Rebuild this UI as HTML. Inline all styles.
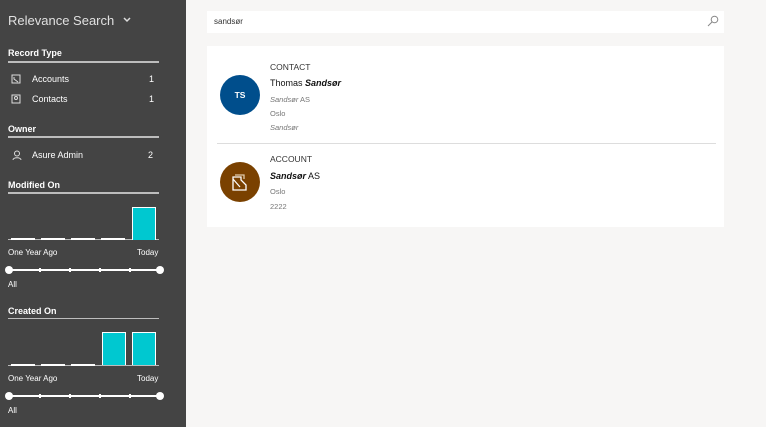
<!DOCTYPE html>
<html><head><meta charset="utf-8"><style>
*{margin:0;padding:0;box-sizing:border-box}
body{width:766px;height:427px;background:#f7f6f5;font-family:"Segoe UI","Liberation Sans",sans-serif;position:relative;overflow:hidden}
.sb{position:absolute;left:0;top:0;width:186px;height:427px;background:#444}
.a{position:absolute;white-space:nowrap}
.h{font-size:9px;font-weight:bold;color:#fff}
.ln{position:absolute;left:8px;width:151px;height:1.5px;background:#bdbdbd}
.it{font-size:9px;color:#fff}
.bar{position:absolute;background:#00c8d0;border:1px solid #fff;border-bottom:none}
.base{position:absolute;height:2px;background:#fff}
.sl{position:absolute;left:9px;width:151px;height:2px;background:#fff}
.k{position:absolute;width:8px;height:8px;border-radius:50%;background:#fff}
.t{position:absolute;width:2px;height:4px;background:#fff}
.sm{font-size:8px;color:#fff}
.card{position:absolute;left:207px;top:46px;width:517px;height:181px;background:#fff}
.g{color:#777;font-size:7.5px}
</style></head><body>
<div class="sb">
<div class="a" style="left:8px;top:13px;font-size:13px;color:#e0e0e0">Relevance Search</div>
<svg class="a" style="left:123px;top:17px" width="8" height="6"><path d="M1 1l3 3 3-3" stroke="#ddd" stroke-width="1.5" fill="none"/></svg>
<div class="a h" style="left:8px;top:48px">Record Type</div><div class="ln" style="top:61px"></div>
<svg class="a" style="left:11px;top:74px" width="10" height="10"><rect x="1" y="1" width="8" height="8" fill="none" stroke="#ddd"/><path d="M3 3v2l4 3" stroke="#ddd" fill="none"/></svg>
<div class="a it" style="left:32px;top:74px">Accounts</div><div class="a it" style="left:149px;top:74px">1</div>
<svg class="a" style="left:11px;top:94px" width="10" height="10"><rect x="1" y="1" width="8" height="8" fill="none" stroke="#ddd"/><circle cx="5" cy="4" r="1.5" fill="none" stroke="#ddd"/></svg>
<div class="a it" style="left:32px;top:94px">Contacts</div><div class="a it" style="left:149px;top:94px">1</div>
<div class="a h" style="left:8px;top:124px">Owner</div><div class="ln" style="top:136px"></div>
<svg class="a" style="left:12px;top:150px" width="10" height="11"><circle cx="5" cy="3.5" r="2.5" fill="none" stroke="#ddd"/><path d="M1 10c0-3 8-3 8 0" fill="none" stroke="#ddd"/></svg>
<div class="a it" style="left:32px;top:150px">Asure Admin</div><div class="a it" style="left:148px;top:150px">2</div>
<div class="a h" style="left:8px;top:180px">Modified On</div><div class="ln" style="top:192px"></div>
<div class="base" style="left:8px;top:239px;width:151px;height:1px;background:#bbb"></div>
<div class="base" style="left:11px;top:238px;width:24px"></div><div class="base" style="left:41px;top:238px;width:24px"></div><div class="base" style="left:71px;top:238px;width:24px"></div><div class="base" style="left:101px;top:238px;width:24px"></div>
<div class="bar" style="left:132px;top:207px;width:24px;height:33px"></div>
<div class="a sm" style="left:8px;top:248px">One Year Ago</div><div class="a sm" style="left:137px;top:248px">Today</div>
<div class="sl" style="top:269px"></div><div class="k" style="left:5px;top:266px"></div><div class="k" style="left:156px;top:266px"></div>
<div class="t" style="left:39px;top:268px"></div><div class="t" style="left:69px;top:268px"></div><div class="t" style="left:99px;top:268px"></div><div class="t" style="left:129px;top:268px"></div>
<div class="a sm" style="left:8px;top:280px">All</div>
<div class="a h" style="left:8px;top:306px">Created On</div><div class="ln" style="top:318px;height:1px"></div>
<div class="base" style="left:8px;top:365px;width:151px;height:1px;background:#bbb"></div>
<div class="base" style="left:11px;top:364px;width:24px"></div><div class="base" style="left:41px;top:364px;width:24px"></div><div class="base" style="left:71px;top:364px;width:24px"></div>
<div class="bar" style="left:102px;top:332px;width:24px;height:33px"></div>
<div class="bar" style="left:132px;top:332px;width:24px;height:33px"></div>
<div class="a sm" style="left:8px;top:374px">One Year Ago</div><div class="a sm" style="left:137px;top:374px">Today</div>
<div class="sl" style="top:395px"></div><div class="k" style="left:5px;top:392px"></div><div class="k" style="left:156px;top:392px"></div>
<div class="t" style="left:39px;top:394px"></div><div class="t" style="left:69px;top:394px"></div><div class="t" style="left:99px;top:394px"></div><div class="t" style="left:129px;top:394px"></div>
<div class="a sm" style="left:8px;top:406px">All</div>
</div>
<div class="a" style="left:207px;top:11px;width:517px;height:22px;background:#fff"></div>
<div class="a" style="left:214px;top:17px;font-size:8px;color:#333">sandsør</div>
<svg class="a" style="left:707px;top:15px" width="12" height="12"><circle cx="7.5" cy="4.5" r="3.3" fill="none" stroke="#888"/><path d="M5 7l-4 4" stroke="#888"/></svg>
<div class="card">
<div class="a" style="left:13px;top:29px;width:40px;height:40px;border-radius:50%;background:#004e8c;color:#fff;font-size:8.5px;font-weight:bold;text-align:center;line-height:40px">TS</div>
<div class="a" style="left:63px;top:16px;font-size:8.5px;color:#333">CONTACT</div>
<div class="a" style="left:63px;top:32px;font-size:9px;color:#111">Thomas <b><i>Sandsør</i></b></div>
<div class="a g" style="left:63px;top:49px"><i>Sandsør</i> AS</div>
<div class="a g" style="left:63px;top:63px">Oslo</div>
<div class="a g" style="left:63px;top:77px"><i>Sandsør</i></div>
<div class="a" style="left:10px;top:97px;width:499px;height:1px;background:#ddd"></div>
<div class="a" style="left:13px;top:116px;width:40px;height:40px;border-radius:50%;background:#7a4100"></div>
<svg class="a" style="left:23px;top:126px" width="20" height="20"><path d="M5 3h9v4" fill="none" stroke="#e0c9a8" stroke-width="1.3"/><path d="M3 5h8v3l5 5v5H3z" fill="none" stroke="#fff" stroke-width="1.3"/><path d="M3 7l7 8" stroke="#fff" stroke-width="1.2"/></svg>
<div class="a" style="left:63px;top:108px;font-size:8.5px;color:#333">ACCOUNT</div>
<div class="a" style="left:63px;top:125px;font-size:9px;color:#111"><b><i>Sandsør</i></b> AS</div>
<div class="a g" style="left:63px;top:141px">Oslo</div>
<div class="a g" style="left:63px;top:156px">2222</div>
</div>
</body></html>
